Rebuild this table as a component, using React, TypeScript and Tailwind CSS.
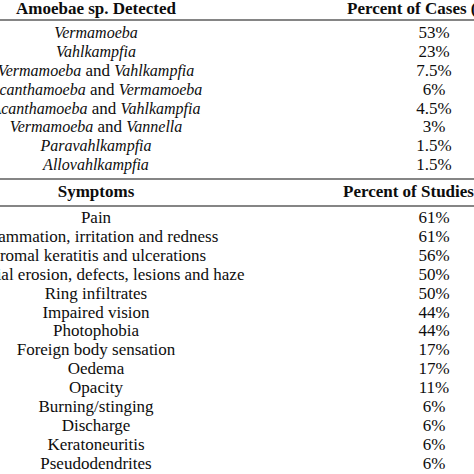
const I = ({ children }: { children: React.ReactNode }) => (
  <i className="text-[16px]">{children}</i>
);

const amoebae: { name: React.ReactNode; pct: string }[] = [
  { name: <I>Vermamoeba</I>, pct: "53%" },
  { name: <I>Vahlkampfia</I>, pct: "23%" },
  { name: <><I>Vermamoeba</I> and <I>Vahlkampfia</I></>, pct: "7.5%" },
  { name: <><I>Acanthamoeba</I> and <I>Vermamoeba</I></>, pct: "6%" },
  { name: <><I>Acanthamoeba</I> and <I>Vahlkampfia</I></>, pct: "4.5%" },
  { name: <><I>Vermamoeba</I> and <I>Vannella</I></>, pct: "3%" },
  { name: <I>Paravahlkampfia</I>, pct: "1.5%" },
  { name: <I>Allovahlkampfia</I>, pct: "1.5%" },
];

const symptoms = [
  ["Pain", "61%"],
  ["Inflammation, irritation and redness", "61%"],
  ["Stromal keratitis and ulcerations", "56%"],
  ["Epithelial erosion, defects, lesions and haze", "50%"],
  ["Ring infiltrates", "50%"],
  ["Impaired vision", "44%"],
  ["Photophobia", "44%"],
  ["Foreign body sensation", "17%"],
  ["Oedema", "17%"],
  ["Opacity", "11%"],
  ["Burning/stinging", "6%"],
  ["Discharge", "6%"],
  ["Keratoneuritis", "6%"],
  ["Pseudodendrites", "6%"],
];

function Row({ left, right }: { left: React.ReactNode; right: string }) {
  return (
    <div className="grid grid-cols-[192px_202px_80px] h-[18.9px] items-center">
      <div className="flex justify-center">
        <span className="whitespace-nowrap">{left}</span>
      </div>
      <div />
      <div className="text-center whitespace-nowrap">{right}</div>
    </div>
  );
}

export default function App() {
  return (
    <div
      className="w-[474px] h-[474px] overflow-hidden bg-white text-[#0d0d0d] text-[17px] leading-[18.9px]"
      style={{ fontFamily: '"Liberation Serif", serif' }}
    >
      {/* table 1 */}
      <div className="grid grid-cols-[192px_282px] h-[19px] items-center font-bold">
        <div className="flex justify-center">
          <span className="whitespace-nowrap">Amoebae sp. Detected</span>
        </div>
        <div className="pl-[155px] whitespace-nowrap">Percent of Cases (%)</div>
      </div>
      <div className="border-t-2 border-[#858585]" />
      <div className="pt-[3px] pb-[3px]">
        {amoebae.map((r, i) => (
          <Row key={i} left={r.name} right={r.pct} />
        ))}
      </div>
      <div className="border-t-2 border-[#858585]" />

      {/* table 2 */}
      <div className="grid grid-cols-[192px_282px] h-[25px] items-center font-bold">
        <div className="flex justify-center">
          <span className="whitespace-nowrap">Symptoms</span>
        </div>
        <div className="pl-[151px] whitespace-nowrap">Percent of Studies</div>
      </div>
      <div className="border-t-2 border-[#858585]" />
      <div className="pt-[2px]">
        {symptoms.map(([s, p]) => (
          <Row key={s} left={s} right={p} />
        ))}
      </div>
    </div>
  );
}
